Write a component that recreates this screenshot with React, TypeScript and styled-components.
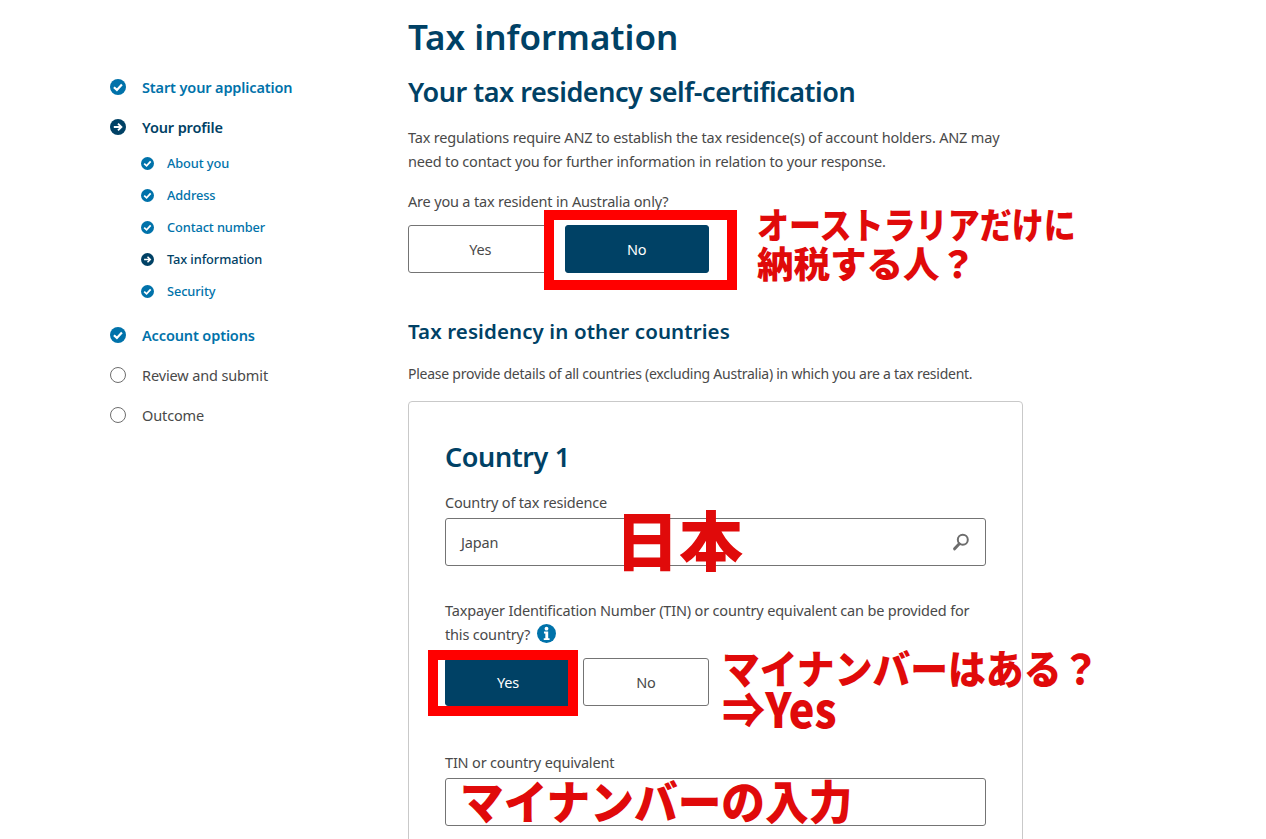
import React from "react";
import styled, { createGlobalStyle } from "styled-components";

const navy = "#004165";
const blue = "#0072aa";
const grey = "#494949";

const GlobalStyle = createGlobalStyle`
  html, body {
    margin: 0;
    padding: 0;
    height: 100%;
    overflow: hidden;
    background: #fff;
  }
  body {
    font-family: "Noto Sans", "Liberation Sans", sans-serif;
    color: ${grey};
  }
`;

const Page = styled.div`
  position: relative;
  display: flex;
  height: 839px;
  overflow: hidden;
  padding-left: 110px;
`;

const Sidebar = styled.nav`
  width: 298px;
  flex: none;
  padding-top: 67px;
`;

const StepRow = styled.div<{ $state: "done" | "current" | "todo" }>`
  display: flex;
  align-items: center;
  gap: 16px;
  height: 40px;
  font-size: 14.5px;
  font-weight: ${(p) => (p.$state === "todo" ? 400 : 600)};
  color: ${(p) =>
    p.$state === "done" ? blue : p.$state === "current" ? navy : grey};
  letter-spacing: -0.13px;
`;

const SubList = styled.div`
  padding: 0 0 8px 31px;
`;

const SubRow = styled.div<{ $state: "done" | "current" }>`
  display: flex;
  align-items: center;
  gap: 13px;
  height: 32px;
  font-size: 12.8px;
  font-weight: 500;
  color: ${(p) => (p.$state === "done" ? blue : navy)};
  letter-spacing: -0.1px;
`;

const Main = styled.main`
  width: 615px;
  flex: none;
`;

const Title = styled.h1`
  margin: 12px 0 0;
  font-size: 35px;
  line-height: 50px;
  font-weight: 600;
  color: ${navy};
`;

const SectionTitle = styled.h2`
  margin: 10px 0 0;
  font-size: 27px;
  line-height: 40px;
  font-weight: 600;
  letter-spacing: -0.46px;
  color: ${navy};
`;

const SubTitle = styled.h3`
  margin: 43px 0 0;
  font-size: 20.5px;
  line-height: 30px;
  font-weight: 600;
  letter-spacing: 0.1px;
  color: ${navy};
`;

const Text = styled.p<{ $top?: number }>`
  margin: ${(p) => p.$top ?? 0}px 0 0;
  font-size: 14.5px;
  line-height: 24px;
  color: ${grey};
  letter-spacing: -0.18px;
`;

const SmallText = styled(Text)`
  font-size: 14px;
  letter-spacing: -0.25px;
`;

const Choice = styled.div<{ $width: number; $top: number }>`
  display: grid;
  grid-template-columns: 1fr 1fr;
  gap: 12px;
  width: ${(p) => p.$width}px;
  margin-top: ${(p) => p.$top}px;
`;

const ChoiceButton = styled.button<{ $on?: boolean }>`
  height: 48px;
  padding: 0;
  border-radius: 3px;
  border: 1px solid ${(p) => (p.$on ? navy : "#747474")};
  background: ${(p) => (p.$on ? navy : "#fff")};
  color: ${(p) => (p.$on ? "#fff" : grey)};
  font-family: inherit;
  font-size: 14.5px;
  letter-spacing: -0.18px;
`;

const Card = styled.section`
  margin-top: 15px;
  padding: 35px 36px;
  border: 1px solid #c9c9c9;
  border-radius: 4px;
`;

const CardTitle = styled.h3`
  margin: 0;
  font-size: 27px;
  line-height: 40px;
  font-weight: 600;
  letter-spacing: -0.4px;
  color: ${navy};
`;

const Field = styled.div`
  display: flex;
  align-items: center;
  justify-content: space-between;
  box-sizing: border-box;
  height: 48px;
  margin-top: 4px;
  padding: 0 15px;
  border: 1px solid #747474;
  border-radius: 3px;
  font-size: 14.5px;
  letter-spacing: -0.18px;
  color: ${grey};
`;

const InfoIcon = styled.svg`
  width: 19px;
  height: 19px;
  margin-left: 7px;
  vertical-align: -3px;
`;

const Annotation = styled.div<{ $x: number; $y: number; $size: number; $squeeze?: number }>`
  position: absolute;
  left: ${(p) => p.$x}px;
  top: ${(p) => p.$y}px;
  font-family: "Noto Sans CJK JP", "Noto Sans", sans-serif;
  font-size: ${(p) => p.$size}px;
  line-height: 0.85;
  font-weight: 900;
  color: #e00a0a;
  white-space: nowrap;
  transform: scaleX(${(p) => p.$squeeze ?? 1});
  transform-origin: left center;
`;

const RedBox = styled.div<{ $x: number; $y: number; $w: number; $h: number; $b: number }>`
  position: absolute;
  box-sizing: border-box;
  left: ${(p) => p.$x}px;
  top: ${(p) => p.$y}px;
  width: ${(p) => p.$w}px;
  height: ${(p) => p.$h}px;
  border: ${(p) => p.$b}px solid #ff0000;
`;

const StepIcon = ({ kind, size }: { kind: "done" | "current" | "todo"; size: number }) => {
  if (kind === "todo") {
    return (
      <svg width={size} height={size} viewBox="0 0 16 16" style={{ flex: "none" }}>
        <circle cx="8" cy="8" r="7.5" fill="none" stroke="#6d6d6d" strokeWidth="1" />
      </svg>
    );
  }
  if (kind === "current") {
    return (
      <svg width={size} height={size} viewBox="0 0 16 16" style={{ flex: "none" }}>
        <circle cx="8" cy="8" r="8" fill={navy} />
        <path
          d="M3.8 8h7.2M8 4.6 11.4 8 8 11.4"
          fill="none"
          stroke="#fff"
          strokeWidth="1.9"
        />
      </svg>
    );
  }
  return (
    <svg width={size} height={size} viewBox="0 0 16 16" style={{ flex: "none" }}>
      <circle cx="8" cy="8" r="8" fill={blue} />
      <path d="M3.9 8.2 6.9 10.9l5-5.4" fill="none" stroke="#fff" strokeWidth="2.2" />
    </svg>
  );
};

const SearchIcon = () => (
  <svg width="18" height="18" viewBox="0 0 18 18">
    <circle cx="10.8" cy="6.8" r="5" fill="none" stroke="#6d6d6d" strokeWidth="2" />
    <path d="M7.3 10.8 2.6 15.8" fill="none" stroke="#6d6d6d" strokeWidth="3" strokeLinecap="round" />
  </svg>
);

const App = () => {
  return (
    <Page>
      <GlobalStyle />
      <Sidebar>
        <StepRow $state="done">
          <StepIcon kind="done" size={16} />
          Start your application
        </StepRow>
        <StepRow $state="current">
          <StepIcon kind="current" size={16} />
          Your profile
        </StepRow>
        <SubList>
          <SubRow $state="done">
            <StepIcon kind="done" size={13} />
            About you
          </SubRow>
          <SubRow $state="done">
            <StepIcon kind="done" size={13} />
            Address
          </SubRow>
          <SubRow $state="done">
            <StepIcon kind="done" size={13} />
            Contact number
          </SubRow>
          <SubRow $state="current">
            <StepIcon kind="current" size={13} />
            Tax information
          </SubRow>
          <SubRow $state="done">
            <StepIcon kind="done" size={13} />
            Security
          </SubRow>
        </SubList>
        <StepRow $state="done">
          <StepIcon kind="done" size={16} />
          Account options
        </StepRow>
        <StepRow $state="todo">
          <StepIcon kind="todo" size={16} />
          Review and submit
        </StepRow>
        <StepRow $state="todo">
          <StepIcon kind="todo" size={16} />
          Outcome
        </StepRow>
      </Sidebar>

      <Main>
        <Title>Tax information</Title>
        <SectionTitle>Your tax residency self-certification</SectionTitle>
        <Text $top={13}>
          Tax regulations require ANZ to establish the tax residence(s) of account holders. ANZ may
          <br />
          need to contact you for further information in relation to your response.
        </Text>
        <Text $top={16}>Are you a tax resident in Australia only?</Text>
        <Choice $width={301} $top={12}>
          <ChoiceButton>Yes</ChoiceButton>
          <ChoiceButton $on>No</ChoiceButton>
        </Choice>
        <SubTitle>Tax residency in other countries</SubTitle>
        <SmallText $top={16}>
          Please provide details of all countries (excluding Australia) in which you are a tax resident.
        </SmallText>
        <Card>
          <CardTitle>Country 1</CardTitle>
          <Text $top={13}>Country of tax residence</Text>
          <Field>
            Japan
            <SearchIcon />
          </Field>
          <Text $top={32}>
            Taxpayer Identification Number (TIN) or country equivalent can be provided for
            <br />
            this country?
            <InfoIcon viewBox="0 0 18 18">
              <circle cx="9" cy="9" r="9" fill={blue} />
              <circle cx="9" cy="4.4" r="1.8" fill="#fff" />
              <path d="M6.6 7.2h4v6.2h1.3v1.8H6.4v-1.8h1.5V9H6.6z" fill="#fff" />
            </InfoIcon>
          </Text>
          <Choice $width={264} $top={12}>
            <ChoiceButton $on>Yes</ChoiceButton>
            <ChoiceButton>No</ChoiceButton>
          </Choice>
          <Text $top={44}>TIN or country equivalent</Text>
          <Field />
        </Card>
      </Main>

      <RedBox $x={544} $y={210} $w={193} $h={80} $b={10} />
      <RedBox $x={428} $y={650} $w={150} $h={66} $b={10} />
      <Annotation $x={757} $y={208} $size={36} $squeeze={0.89}>オーストラリアだけに</Annotation>
      <Annotation $x={757} $y={247} $size={36.5}>納税する人？</Annotation>
      <Annotation $x={615} $y={510} $size={64}>日本</Annotation>
      <Annotation $x={722} $y={650} $size={40} $squeeze={0.945}>マイナンバーはある？</Annotation>
      <Annotation $x={722} $y={687} $size={48} $squeeze={0.9}>⇒Yes</Annotation>
      <Annotation $x={460} $y={780} $size={46} $squeeze={0.95}>マイナンバーの入力</Annotation>
    </Page>
  );
};

export default App;
